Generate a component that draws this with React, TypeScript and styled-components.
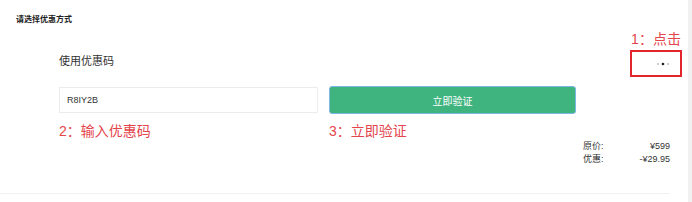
import React from 'react';
import styled, { createGlobalStyle } from 'styled-components';

const GlobalStyle = createGlobalStyle`
  html, body {
    margin: 0;
    padding: 0;
    background: #f1f1f1;
    font-family: "Liberation Sans", "Noto Sans CJK SC", sans-serif;
    color: #333;
  }
`;

const Panel = styled.div`
  width: 688px;
  height: 202px;
  background: #fff;
  box-sizing: border-box;
  padding-top: 15px;
`;

const Title = styled.div`
  padding-left: 16px;
  font-size: 8px;
  line-height: 10px;
  font-weight: bold;
  color: #222;
`;

const Body = styled.div`
  padding-left: 59px;
  padding-right: 6px;
`;

const OptionRow = styled.div`
  display: flex;
  justify-content: space-between;
  align-items: flex-end;
  margin-top: 6px;
`;

const OptionLabel = styled.div`
  font-size: 11px;
  line-height: 25px;
  margin-bottom: 3px;
  color: #333;
`;

const HintCol = styled.div`
  display: flex;
  flex-direction: column;
  align-items: center;
  gap: 3px;
`;

const Hint = styled.div`
  font-size: 14px;
  line-height: 16px;
  color: #e4454c;
  white-space: nowrap;
`;

const MarkBox = styled.div`
  width: 52px;
  height: 27px;
  box-sizing: border-box;
  border: 2px solid #e3262c;
  display: flex;
  align-items: center;
  justify-content: flex-end;
  padding-right: 10px;
`;

const Columns = styled.div<{ $top: number }>`
  display: grid;
  grid-template-columns: 259px 247px;
  column-gap: 11px;
  align-items: center;
  margin-top: ${p => p.$top}px;
`;

const CodeInput = styled.div`
  height: 26px;
  box-sizing: border-box;
  border: 1px solid #ececec;
  padding-left: 7px;
  display: flex;
  align-items: center;
  font-size: 9px;
  color: #333;
`;

const VerifyButton = styled.div`
  height: 28px;
  box-sizing: border-box;
  border: 1px solid #7cb6e2;
  border-radius: 3px;
  background: #40b47f;
  color: #fff;
  font-size: 10px;
  display: flex;
  align-items: center;
  justify-content: center;
`;

const Prices = styled.div`
  display: grid;
  grid-template-columns: auto auto;
  justify-content: space-between;
  width: 87px;
  margin-left: auto;
  margin-right: 12px;
  margin-top: 1px;
  font-size: 9px;
  line-height: 13px;
  color: #333;
`;

const Amount = styled.span`
  text-align: right;
`;

const Divider = styled.div`
  margin-top: 27px;
  width: 670px;
  border-top: 1px solid #f0f0f0;
`;

const Dots = () => (
  <svg width="14" height="4" viewBox="0 0 14 4">
    <circle cx="2" cy="2" r="0.8" fill="#888" />
    <circle cx="7" cy="2" r="1.3" fill="#222" />
    <circle cx="12" cy="2" r="0.8" fill="#888" />
  </svg>
);

export default function App() {
  return (
    <>
      <GlobalStyle />
      <Panel>
        <Title>请选择优惠方式</Title>
        <Body>
          <OptionRow>
            <OptionLabel>使用优惠码</OptionLabel>
            <HintCol>
              <Hint>1：点击</Hint>
              <MarkBox>
                <Dots />
              </MarkBox>
            </HintCol>
          </OptionRow>
          <Columns $top={9}>
            <CodeInput>R8IY2B</CodeInput>
            <VerifyButton>立即验证</VerifyButton>
          </Columns>
          <Columns $top={9}>
            <Hint>2：输入优惠码</Hint>
            <Hint>3：立即验证</Hint>
          </Columns>
          <Prices>
            <span>原价:</span>
            <Amount>¥599</Amount>
            <span>优惠:</span>
            <Amount>-¥29.95</Amount>
          </Prices>
        </Body>
        <Divider />
      </Panel>
    </>
  );
}
